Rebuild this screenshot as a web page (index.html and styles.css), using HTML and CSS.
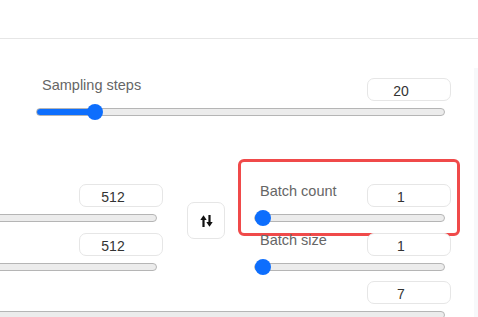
FILE: index.html
```
<!DOCTYPE html>
<html lang="en">
<head>
    <meta charset="UTF-8">
    <meta name="viewport" content="width=device-width, initial-scale=1.0">
    <title>Generation settings</title>
    <link rel="stylesheet" href="styles.css">
</head>
<body>
    <div class="topbar"></div>
    <div class="layout">
        <main class="panel">
            <div class="field field-steps">
                <label class="field-label">Sampling steps</label>
                <input type="number" class="num" value="20">
                <input type="range" class="range" min="1" max="150" value="20">
            </div>

            <div class="dims">
                <div class="dims-col">
                    <div class="field">
                        <span class="field-label"></span>
                        <input type="number" class="num" value="512" aria-label="Width">
                        <input type="range" class="range" min="64" max="2048" step="8" value="512" aria-label="Width">
                    </div>
                    <div class="field">
                        <span class="field-label"></span>
                        <input type="number" class="num" value="512" aria-label="Height">
                        <input type="range" class="range" min="64" max="2048" step="8" value="512" aria-label="Height">
                    </div>
                </div>

                <button class="swap" title="Swap width and height">
                    <svg width="13" height="12" viewBox="0 0 13 12">
                        <line x1="3.5" y1="3" x2="3.5" y2="12" stroke="#111" stroke-width="2.2"/>
                        <polygon points="0.3,5 3.5,0.2 6.7,5" fill="#111"/>
                        <line x1="9.5" y1="0" x2="9.5" y2="9" stroke="#111" stroke-width="2.2"/>
                        <polygon points="6.3,7 9.5,11.8 12.7,7" fill="#111"/>
                    </svg>
                </button>

                <div class="dims-col batch-col">
                    <div class="field highlight">
                        <label class="field-label">Batch count</label>
                        <input type="number" class="num" value="1">
                        <input type="range" class="range" min="1" max="100" value="1">
                    </div>
                    <div class="field">
                        <label class="field-label">Batch size</label>
                        <input type="number" class="num" value="1">
                        <input type="range" class="range" min="1" max="8" value="1">
                    </div>
                </div>
            </div>

            <div class="field field-cfg">
                <span class="field-label"></span>
                <input type="number" class="num" value="7" aria-label="CFG Scale">
                <input type="range" class="range" min="1" max="30" step="0.5" value="7" aria-label="CFG Scale">
            </div>
        </main>
        <aside class="side"></aside>
    </div>

    <script>
        // fill the track up to the thumb centre
        document.querySelectorAll(".range").forEach(function (r) {
            var w = r.offsetWidth;
            var f = (r.value - r.min) / (r.max - r.min);
            r.style.setProperty("--fill", (8 + f * (w - 16)) + "px");
        });
    </script>
</body>
</html>
```

FILE: styles.css
```
* {
    margin: 0;
    padding: 0;
    box-sizing: border-box;
}

body {
    width: 478px;
    height: 317px;
    overflow: hidden;
    background: #fff;
    font-family: 'Liberation Sans', Arial, sans-serif;
}

.topbar {
    height: 39px;
    border-bottom: 1px solid #e6e6e6;
}

.layout {
    display: flex;
    margin-left: -200px;
}

.panel {
    flex: 1;
    padding: 39px 23px 0 0;
}

.side {
    width: 4px;
    margin-top: 29px;
    height: 260px;
    background: #f7f8fa;
}

/* slider field: label + number box, range below */
.field {
    display: grid;
    grid-template-columns: 1fr 84px;
    row-gap: 3px;
    position: relative;
}

.field-label {
    align-self: start;
    margin-top: -1px;
    padding-left: 6px;
    font-size: 14.5px;
    color: #666;
    white-space: nowrap;
}

.num {
    width: 84px;
    height: 23px;
    border: 1px solid #e6e6e6;
    border-radius: 7px;
    background: #fff;
    padding: 2px 16px 0 0;
    font-family: inherit;
    font-size: 14px;
    color: #333;
    text-align: center;
    outline: none;
    -moz-appearance: textfield;
}

    .num::-webkit-inner-spin-button,
    .num::-webkit-outer-spin-button {
        -webkit-appearance: none;
        margin: 0;
    }

.range {
    grid-column: 1 / -1;
    -webkit-appearance: none;
    appearance: none;
    width: calc(100% - 6px);
    height: 16px;
    margin: 0;
    background: transparent;
}

    .range::-webkit-slider-runnable-track {
        box-sizing: border-box;
        height: 8px;
        border: 1px solid #b5b5b5;
        border-radius: 4px;
        background: linear-gradient(to right, #0d6efd var(--fill, 0), #ececec var(--fill, 0));
    }

    .range::-webkit-slider-thumb {
        -webkit-appearance: none;
        width: 16px;
        height: 16px;
        margin-top: -5px;
        border: none;
        border-radius: 50%;
        background: #0d6efd;
    }

.field-steps {
    margin-left: 236px;
}

.dims {
    display: flex;
    align-items: flex-start;
    margin-top: 64px;
}

.dims-col {
    display: flex;
    flex-direction: column;
    gap: 7px;
    width: 363px;
}

.batch-col {
    flex: 1;
    width: auto;
}

.swap {
    width: 38px;
    height: 37px;
    margin: 18px 29px 0 24px;
    border: 1px solid #e6e6e6;
    border-radius: 7px;
    background: #fff;
    display: flex;
    align-items: center;
    justify-content: center;
    cursor: pointer;
}

/* annotation frame around the batch count field */
.highlight::after {
    content: '';
    position: absolute;
    top: -25px;
    right: -9px;
    bottom: -10px;
    left: -16px;
    border: 3px solid #f04a4a;
    border-radius: 6px;
    pointer-events: none;
}

.field-cfg {
    margin-top: 6px;
}
```
